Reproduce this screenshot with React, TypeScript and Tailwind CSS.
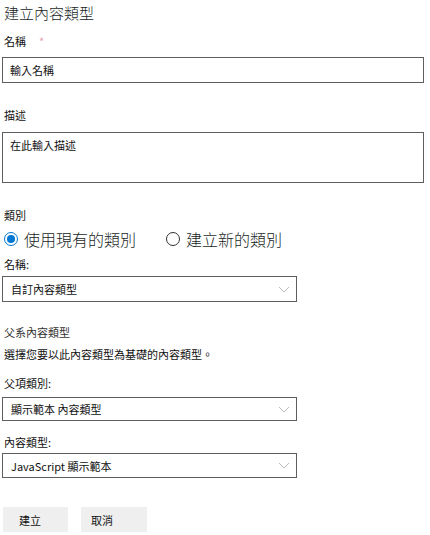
import React, { useState } from "react";

const font = { fontFamily: '"Noto Sans CJK TC", "Noto Sans", sans-serif' };

function Chevron() {
  return (
    <svg width="12" height="7" viewBox="0 0 12 7" fill="none" className="shrink-0">
      <path d="M1 1l5 5 5-5" stroke="#bdbbb9" strokeWidth="1" />
    </svg>
  );
}

function Select({ value, h }: { value: string; h: string }) {
  return (
    <div className={`w-[295px] ${h} border border-[#605e5c] flex items-center justify-between pl-[8px] pr-[6px]`}>
      <span className="text-[11px] leading-[14px] text-[#111]">{value}</span>
      <Chevron />
    </div>
  );
}

function Radio({ checked, label, onClick }: { checked: boolean; label: string; onClick: () => void }) {
  return (
    <button type="button" onClick={onClick} className="flex items-center gap-[6px]">
      <span
        className={`w-[14px] h-[14px] rounded-full border flex items-center justify-center ${
          checked ? "border-[#0078d4]" : "border-[#323130]"
        }`}
      >
        {checked && <span className="w-[8px] h-[8px] rounded-full bg-[#0078d4]" />}
      </span>
      <span className="text-[16px] leading-[22px] text-[#201f1e] font-light">{label}</span>
    </button>
  );
}

export default function App() {
  const [useExisting, setUseExisting] = useState(true);

  return (
    <div className="w-[430px] h-[535px] bg-white pl-[2px] flex flex-col overflow-hidden" style={font}>
      <h1 className="mt-[3px] text-[15px] leading-[20px] font-light text-[#201f1e] pl-[2px]">建立內容類型</h1>

      <div className="mt-[11px] text-[11px] leading-[14px] text-[#111] pl-[2px] flex gap-[13px]">
        <span>名稱</span>
        <span className="text-[#e8a0b0]">*</span>
      </div>
      <div className="mt-[9px] w-[422px] h-[26px] border border-[#605e5c] flex items-center pl-[7px]">
        <span className="text-[11px] leading-[14px] text-[#111]">輸入名稱</span>
      </div>

      <div className="mt-[25px] text-[11px] leading-[14px] text-[#111] pl-[2px]">描述</div>
      <div className="mt-[10px] w-[422px] h-[51px] border border-[#605e5c] pl-[7px] pt-[5px]">
        <div className="text-[11px] leading-[14px] text-[#111]">在此輸入描述</div>
      </div>

      <div className="mt-[25px] text-[11px] leading-[14px] text-[#111] pl-[2px]">類別</div>
      <div className="mt-[6px] flex items-center gap-[30px] pl-[2px] h-[22px]">
        <Radio checked={useExisting} label="使用現有的類別" onClick={() => setUseExisting(true)} />
        <Radio checked={!useExisting} label="建立新的類別" onClick={() => setUseExisting(false)} />
      </div>

      <div className="mt-[7px] text-[11px] leading-[14px] text-[#111] pl-[2px]">名稱:</div>
      <div className="mt-[5px]">
        <Select value="自訂內容類型" h="h-[26px]" />
      </div>

      <div className="mt-[23px] text-[11px] leading-[14px] text-[#323130] pl-[2px]">父系內容類型</div>
      <div className="mt-[8px] text-[11px] leading-[14px] text-[#111] pl-[2px]">選擇您要以此內容類型為基礎的內容類型。</div>

      <div className="mt-[15px] text-[11px] leading-[14px] text-[#111] pl-[2px]">父項類別:</div>
      <div className="mt-[7px]">
        <Select value="顯示範本 內容類型" h="h-[24px]" />
      </div>

      <div className="mt-[14px] text-[11px] leading-[14px] text-[#111] pl-[2px]">內容類型:</div>
      <div className="mt-[4px]">
        <Select value="JavaScript 顯示範本" h="h-[25px]" />
      </div>

      <div className="mt-[29px] flex gap-[13px] pl-[1px]">
        <button type="button" className="w-[65px] h-[25px] bg-[#efefef] text-[11px] leading-[14px] text-[#111] text-left pl-[16px]">
          建立
        </button>
        <button type="button" className="w-[66px] h-[25px] bg-[#efefef] text-[11px] leading-[14px] text-[#111] text-left pl-[10px]">
          取消
        </button>
      </div>
    </div>
  );
}
